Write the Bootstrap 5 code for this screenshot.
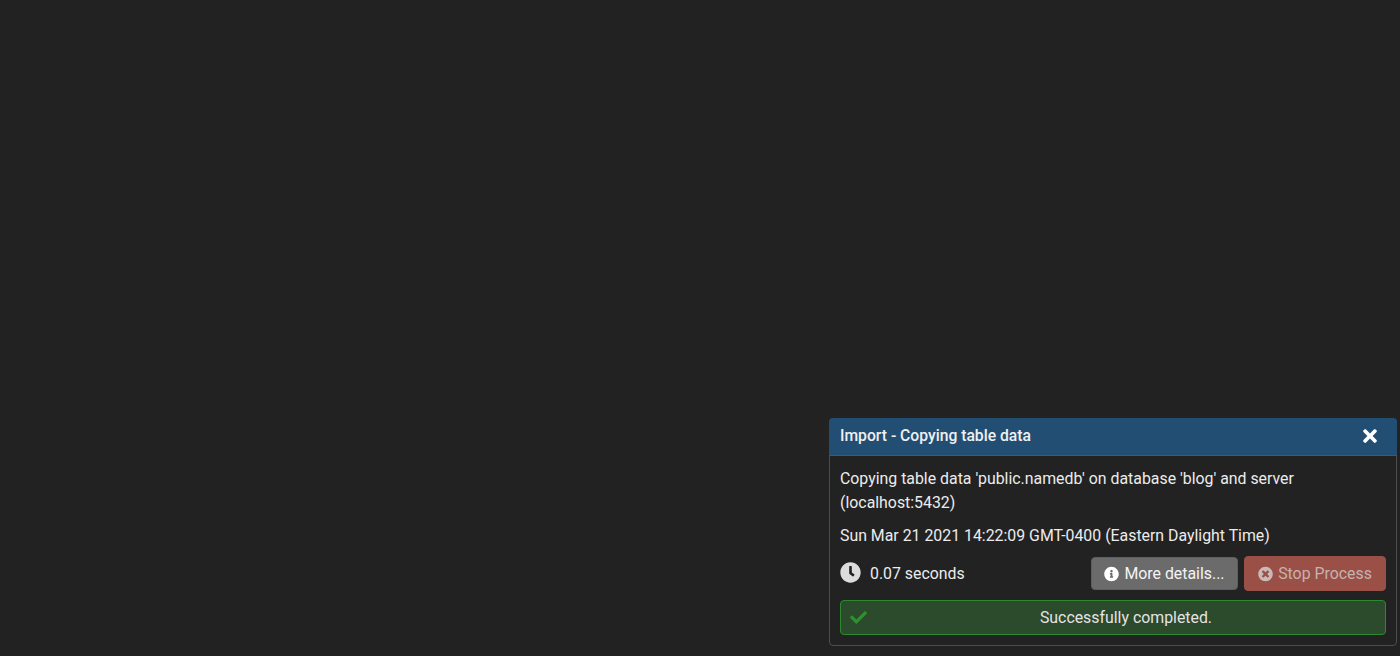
<!DOCTYPE html>
<html lang="en">
<head>
<meta charset="utf-8">
<title>Import</title>
<link href="https://cdn.jsdelivr.net/npm/bootstrap@5.3.0/dist/css/bootstrap.min.css" rel="stylesheet">
<style>
html,body{height:100%;margin:0;background:#222;overflow:hidden}
body{font-family:Roboto,"Liberation Sans",sans-serif;font-size:15.87px;color:#ececec}
.notifier{position:absolute;left:829px;top:418px;width:568px;height:228px;background:#222;border:1px solid #4d4d4d;border-radius:4px}
.notifier-head{height:38px;margin:-1px -1px 0;padding:0 20px 2px 11px;background:#234e73;border-bottom:1px solid #4d5560;border-radius:4px 4px 0 0;color:#f0f0f0;font-weight:500;font-size:15.7px}
.notifier-body{padding:10px 10px 0}
.msg-line{line-height:24px;margin:1px 0 0}
.msg-date{line-height:24px;margin:9px 0 0}
.action-row{margin-top:8px;height:35px}
.clock-ico{width:21px;height:21px;fill:#ddd;margin-right:9px;margin-top:-2px}
.action-btns{gap:6px}
.btn-more,.btn-stop{font-size:15.87px;padding:0;display:flex;align-items:center;justify-content:center;gap:5px;border-radius:4px;line-height:1}
.btn-more{width:147px;height:33px;background:#6b6b6b;border:1px solid #5e5e5e;color:#f4f4f4}
.btn-stop:disabled{width:142px;height:35px;background:#9b5047;border:1px solid #9b5047;color:#c4b3b0;opacity:1}
.btn-more svg{width:15px;height:16px;fill:#fff}
.btn-stop svg{width:15px;height:16px;fill:#c9bab7}
.done-bar{margin-top:9px;height:35px;padding:1px 0 0 26px;background:#2c4a2c;border:1px solid #2b8a2e;border-radius:4px;color:#e4e4e4;position:relative}
.done-check{position:absolute;left:9px;top:8px;width:17px;height:17px;fill:#2a922e}
.x-ico{width:14px;height:20px;fill:#fff}
</style>
</head>
<body>
<div class="notifier">
  <div class="notifier-head d-flex align-items-center justify-content-between">
    <span>Import - Copying table data</span>
    <svg class="x-ico" viewBox="0 0 352 512"><path d="M242.72 256l100.07-100.07c12.28-12.28 12.28-32.19 0-44.48l-22.24-22.24c-12.28-12.28-32.19-12.28-44.48 0L176 189.28 75.93 89.21c-12.28-12.28-32.19-12.28-44.48 0L9.21 111.45c-12.28 12.28-12.28 32.19 0 44.48L109.28 256 9.21 356.07c-12.28 12.28-12.28 32.19 0 44.48l22.24 22.24c12.28 12.28 32.2 12.28 44.48 0L176 322.72l100.07 100.07c12.28 12.28 32.2 12.28 44.48 0l22.24-22.24c12.28-12.28 12.28-32.19 0-44.48L242.72 256z"/></svg>
  </div>
  <div class="notifier-body">
    <p class="msg-line">Copying table data 'public.namedb' on database 'blog' and server<br>(localhost:5432)</p>
    <p class="msg-date">Sun Mar 21 2021 14:22:09 GMT-0400 (Eastern Daylight Time)</p>
    <div class="action-row d-flex align-items-center">
      <svg class="clock-ico" viewBox="0 0 512 512"><path d="M256,8C119,8,8,119,8,256S119,504,256,504,504,393,504,256,393,8,256,8Zm92.49,313h0l-20,25a16,16,0,0,1-22.49,2.5h0l-67-49.72a40,40,0,0,1-15-31.23V112a16,16,0,0,1,16-16h32a16,16,0,0,1,16,16V256l58,42.5A16,16,0,0,1,348.49,321Z"/></svg>
      <span>0.07 seconds</span>
      <div class="action-btns ms-auto d-flex align-items-center">
        <button type="button" class="btn btn-more"><svg viewBox="0 0 512 512"><path d="M256 8C119.043 8 8 119.083 8 256c0 136.997 111.043 248 248 248s248-111.003 248-248C504 119.083 392.957 8 256 8zm0 110c23.196 0 42 18.804 42 42s-18.804 42-42 42-42-18.804-42-42 18.804-42 42-42zm56 254c0 6.627-5.373 12-12 12h-88c-6.627 0-12-5.373-12-12v-24c0-6.627 5.373-12 12-12h12v-64h-12c-6.627 0-12-5.373-12-12v-24c0-6.627 5.373-12 12-12h64c6.627 0 12 5.373 12 12v100h12c6.627 0 12 5.373 12 12v24z"/></svg>More details...</button>
        <button type="button" class="btn btn-stop" disabled><svg viewBox="0 0 512 512"><path d="M256 8C119 8 8 119 8 256s111 248 248 248 248-111 248-248S393 8 256 8zm121.6 313.1c4.7 4.7 4.7 12.3 0 17L338 377.6c-4.7 4.7-12.3 4.7-17 0L256 312l-65.1 65.6c-4.7 4.7-12.3 4.7-17 0L134.4 338c-4.7-4.7-4.7-12.3 0-17l65.6-65-65.6-65.1c-4.7-4.7-4.7-12.3 0-17l39.6-39.6c4.7-4.7 12.3-4.7 17 0l65 65.7 65.1-65.6c4.7-4.7 12.3-4.7 17 0l39.6 39.6c4.7 4.7 4.7 12.3 0 17L312 256l65.6 65.1z"/></svg>Stop Process</button>
      </div>
    </div>
    <div class="done-bar d-flex align-items-center justify-content-center">
      <svg class="done-check" viewBox="0 0 512 512"><path d="M173.898 439.404l-166.4-166.4c-9.997-9.997-9.997-26.206 0-36.204l36.203-36.204c9.997-9.998 26.207-9.998 36.204 0L192 312.69 432.095 72.596c9.997-9.997 26.207-9.997 36.204 0l36.203 36.204c9.997 9.997 9.997 26.206 0 36.204l-294.4 294.401c-9.998 9.997-26.207 9.997-36.204-.001z"/></svg>
      <span>Successfully completed.</span>
    </div>
  </div>
</div>
<script src="https://cdn.jsdelivr.net/npm/bootstrap@5.3.0/dist/js/bootstrap.bundle.min.js"></script>
</body>
</html>
